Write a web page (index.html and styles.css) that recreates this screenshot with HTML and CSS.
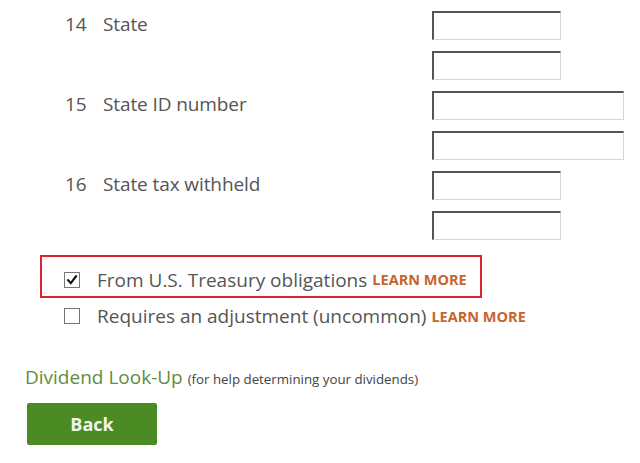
FILE: index.html
```html
<!DOCTYPE html>
<html lang="en">
<head>
<meta charset="utf-8">
<title>State information</title>
<link rel="stylesheet" href="styles.css">
</head>
<body>
<div class="page">
  <div class="fields">
    <div class="field prev">
      <div class="inputs"><input class="box" type="text"></div>
    </div>
    <div class="field">
      <div class="label"><span class="num">14</span><span class="name">State</span></div>
      <div class="inputs">
        <input class="box" type="text">
        <input class="box" type="text">
      </div>
    </div>
    <div class="field">
      <div class="label"><span class="num">15</span><span class="name">State ID number</span></div>
      <div class="inputs">
        <input class="box wide" type="text">
        <input class="box wide" type="text">
      </div>
    </div>
    <div class="field">
      <div class="label"><span class="num">16</span><span class="name">State tax withheld</span></div>
      <div class="inputs">
        <input class="box" type="text">
        <input class="box" type="text">
      </div>
    </div>
  </div>

  <div class="checks">
    <div class="highlight">
      <label class="check">
        <span class="tick checked">
          <svg viewBox="0 0 16 16" width="16" height="16"><path d="M3.5 8.2 L6.6 11.6 L12.6 3.8" fill="none" stroke="#111" stroke-width="2.4" stroke-linecap="square"/></svg>
        </span>
        <span class="text">From U.S. Treasury obligations</span>
        <a class="more" href="#">LEARN MORE</a>
      </label>
    </div>
    <label class="check plain">
      <span class="tick"></span>
      <span class="text">Requires an adjustment (uncommon)</span>
      <a class="more" href="#">LEARN MORE</a>
    </label>
  </div>

  <p class="lookup"><a href="#">Dividend Look-Up</a> <span class="hint">(for help determining your dividends)</span></p>

  <button class="back" type="button">Back</button>
</div>
</body>
</html>
```

FILE: styles.css
```css
* { box-sizing: border-box; }

html, body {
  margin: 0;
  background: #fff;
}

body {
  font-family: "Open Sans", "Liberation Sans", sans-serif;
  color: #555;
  overflow: hidden;
}

.page {
  padding-left: 25px;
}

.fields {
  display: flex;
  flex-direction: column;
  gap: 11px;
  margin-top: -29px;
}

.field {
  display: grid;
  grid-template-columns: 407px auto;
}

.field.prev .inputs { grid-column: 2; }

.label {
  display: flex;
  align-items: center;
  height: 26px;
  padding-left: 40px;
  font-size: 19px;
  letter-spacing: -0.1px;
}

.num { width: 38px; }

.inputs {
  display: flex;
  flex-direction: column;
  gap: 11px;
}

.box {
  display: block;
  width: 129px;
  height: 29px;
  margin: 0;
  border-style: solid;
  border-width: 2px 1px 1px 2px;
  border-color: #555 #d6d6d6 #d6d6d6 #555;
  background: #fff;
}

.box.wide { width: 192px; }

.checks {
  margin-top: 15px;
  padding-left: 15px;
}

.highlight {
  width: 442px;
  height: 43px;
  border: 2px solid #d9262e;
  display: flex;
  align-items: center;
  padding-left: 22px;
  padding-top: 7px;
}

.check {
  display: flex;
  align-items: center;
  font-size: 19px;
  color: #555;
  line-height: 1.2;
}

.check.plain {
  padding-left: 24px;
  margin-top: 7px;
}

.tick {
  width: 16px;
  height: 16px;
  border: 1px solid #777;
  margin-right: 17px;
  display: flex;
  align-items: center;
  justify-content: center;
  background: #fff;
  flex: none;
}

.tick svg { display: block; }

.more {
  margin-left: 5px;
  font-size: 14.5px;
  font-weight: 700;
  color: #c4662e;
  text-decoration: none;
}

.lookup {
  margin: 40px 0 0;
  font-size: 19px;
  line-height: 1;
}

.lookup a {
  color: #5f8c3e;
  text-decoration: none;
}

.hint {
  font-size: 13.3px;
  color: #444;
}

.back {
  display: block;
  margin: 16px 0 0 2px;
  width: 130px;
  height: 42px;
  border: none;
  border-radius: 2px;
  background: #4c8b24;
  color: #f1f4ee;
  font-family: "Open Sans", "Liberation Sans", sans-serif;
  font-size: 18px;
  font-weight: 700;
}
```
